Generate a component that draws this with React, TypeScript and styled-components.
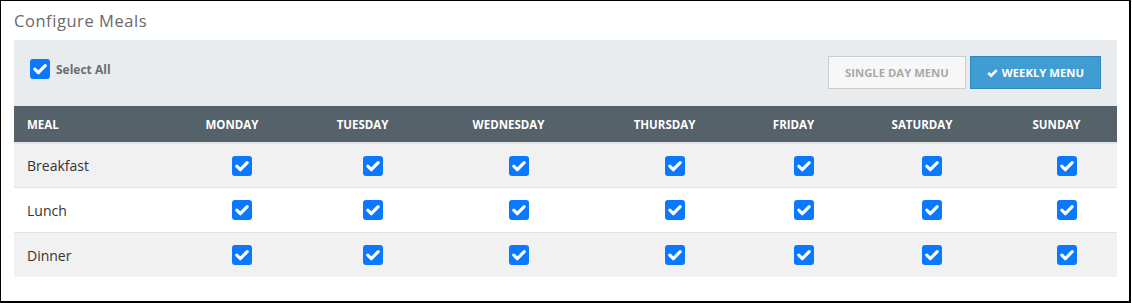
import styled, { createGlobalStyle } from "styled-components";

const GlobalStyle = createGlobalStyle`
  html, body {
    margin: 0;
    padding: 0;
    background: #ffffff;
  }
  body {
    font-family: "Open Sans", "Liberation Sans", sans-serif;
  }
`;

const days = [
  "Monday",
  "Tuesday",
  "Wednesday",
  "Thursday",
  "Friday",
  "Saturday",
  "Sunday",
];

const meals = ["Breakfast", "Lunch", "Dinner"];

const columns = "151px 134px 127px 165px 147px 111px 146px 123px";

const CheckMark = ({ size }: { size: number }) => (
  <svg width={size} height={size} viewBox="0 0 20 20" fill="none">
    <path
      d="M4.8 10.2 L8.3 13.7 L15.2 6.6"
      stroke="#ffffff"
      strokeWidth="3.2"
      strokeLinecap="round"
      strokeLinejoin="round"
    />
  </svg>
);

const App = () => {
  return (
    <>
      <GlobalStyle />
      <Frame>
        <Title>Configure Meals</Title>
        <Panel>
          <Toolbar>
            <SelectAll>
              <Box>
                <CheckMark size={20} />
              </Box>
              <SelectLabel>Select All</SelectLabel>
            </SelectAll>
            <Buttons>
              <MenuButton>Single Day Menu</MenuButton>
              <MenuButton $active>
                <svg width="11" height="10" viewBox="0 0 12 10">
                  <path
                    d="M1.4 5 L4.5 8 L10.6 1.8"
                    stroke="#ffffff"
                    strokeWidth="2.8"
                    fill="none"
                  />
                </svg>
                Weekly Menu
              </MenuButton>
            </Buttons>
          </Toolbar>
          <Table>
            <HeadRow>
              <HeadCell>Meal</HeadCell>
              {days.map((d) => (
                <HeadCell key={d} $center>
                  {d}
                </HeadCell>
              ))}
            </HeadRow>
            <Body>
              {meals.map((m, i) => (
                <Row key={m} $striped={i % 2 === 0}>
                  <MealCell>{m}</MealCell>
                  {days.map((d) => (
                    <CheckCell key={d}>
                      <Box>
                        <CheckMark size={20} />
                      </Box>
                    </CheckCell>
                  ))}
                </Row>
              ))}
            </Body>
          </Table>
        </Panel>
      </Frame>
    </>
  );
};

export default App;

const Frame = styled.div`
  box-sizing: border-box;
  width: 1131px;
  height: 303px;
  border: 1px solid #000000;
  border-right-width: 2px;
  border-bottom-width: 2px;
  padding: 0 12px 0 13px;
`;

const Title = styled.div`
  height: 39px;
  line-height: 39px;
  font-size: 16.5px;
  letter-spacing: 0.55px;
  font-weight: 400;
  color: #6a6a6a;
`;

const Panel = styled.div`
  background: #e9ecef;
  display: flex;
  flex-direction: column;
`;

const Toolbar = styled.div`
  display: flex;
  justify-content: space-between;
  align-items: flex-start;
  padding: 16px 16px 17px 16px;
`;

const SelectAll = styled.div`
  display: flex;
  align-items: center;
  gap: 6px;
  margin-top: 3px;
`;

const Box = styled.span`
  display: inline-flex;
  width: 20px;
  height: 20px;
  border-radius: 3px;
  background: #0a78ff;
`;

const SelectLabel = styled.span`
  font-size: 12px;
  font-weight: 700;
  color: #6d6d6d;
`;

const Buttons = styled.div`
  display: flex;
  gap: 4px;
`;

const MenuButton = styled.button<{ $active?: boolean }>`
  box-sizing: border-box;
  height: 33px;
  padding: 0 16px;
  display: flex;
  align-items: center;
  gap: 4px;
  font-family: "Open Sans", "Liberation Sans", sans-serif;
  font-size: 11.3px;
  font-weight: 700;
  text-transform: uppercase;
  letter-spacing: 0;
  border: 1px solid ${(p) => (p.$active ? "#2e87c0" : "#cccccc")};
  background: ${(p) => (p.$active ? "#3f9dd4" : "#f7f7f7")};
  color: ${(p) => (p.$active ? "#ffffff" : "#a9a9a9")};
`;

const Table = styled.div`
  background: #ffffff;
`;

const HeadRow = styled.div`
  display: grid;
  grid-template-columns: ${columns};
  height: 36px;
  align-items: center;
  background: #55626a;
  border-bottom: 2px solid #e2e5e8;
`;

const HeadCell = styled.div<{ $center?: boolean }>`
  font-size: 11.5px;
  font-weight: 700;
  color: #ffffff;
  text-transform: uppercase;
  text-align: ${(p) => (p.$center ? "center" : "left")};
  padding-left: ${(p) => (p.$center ? "0" : "13px")};
`;

const Body = styled.div`
  display: flex;
  flex-direction: column;
`;

const Row = styled.div<{ $striped: boolean }>`
  display: grid;
  grid-template-columns: ${columns};
  align-items: center;
  height: 44px;
  background: ${(p) => (p.$striped ? "#f1f1f1" : "#ffffff")};
  border-top: 1px solid #e0e3e6;

  &:first-child {
    border-top: none;
    height: 43px;
  }
`;

const MealCell = styled.div`
  padding-left: 13px;
  font-size: 14px;
  color: #333333;
`;

const CheckCell = styled.div`
  display: flex;
  justify-content: center;
  padding-left: 20px;
`;
